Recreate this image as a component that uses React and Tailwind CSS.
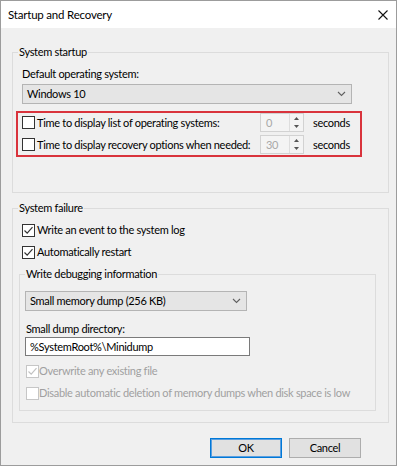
import React from "react";

const font = { fontFamily: 'Lato, "Noto Sans", sans-serif' };

function Check({ checked, disabled }) {
  const c = disabled ? "#c2c2c2" : "#333333";
  return (
    <span
      className={`flex h-[13px] w-[13px] shrink-0 items-center justify-center border bg-white ${
        disabled ? "border-[#c6c6c6]" : "border-[#333333]"
      }`}
    >
      {checked && (
        <svg width="11" height="11" viewBox="0 0 11 11">
          <path d="M1.5 5.5 L4.2 8.2 L9.5 2.2" fill="none" stroke={c} strokeWidth="1.2" />
        </svg>
      )}
    </span>
  );
}

function Chevron() {
  return (
    <svg width="9" height="6" viewBox="0 0 9 6">
      <path d="M1 1 L4.5 4.5 L8 1" fill="none" stroke="#606060" strokeWidth="1.1" />
    </svg>
  );
}

function Spinner({ value }) {
  return (
    <div className="flex h-[19px] w-[44px] border border-[#d2d2d2] bg-[#f4f4f4]">
      <span className="flex-1 pl-[5px] text-[#a8a8a8] leading-[17px]">{value}</span>
      <div className="flex w-[14px] flex-col border-l border-[#dedede]">
        <div className="flex flex-1 items-center justify-center">
          <svg width="5" height="3" viewBox="0 0 5 3">
            <path d="M0 3 L2.5 0 L5 3 Z" fill="#555" />
          </svg>
        </div>
        <div className="flex flex-1 items-center justify-center">
          <svg width="5" height="3" viewBox="0 0 5 3">
            <path d="M0 0 L2.5 3 L5 0 Z" fill="#555" />
          </svg>
        </div>
      </div>
    </div>
  );
}

function TimeRow({ label, value }) {
  return (
    <div className="flex h-[19px] items-center">
      <div className="flex w-[242px] items-center gap-[2px] pl-[4px]">
        <Check />
        <span>{label}</span>
      </div>
      <Spinner value={value} />
      <span className="ml-[9px]">seconds</span>
    </div>
  );
}

export default function App() {
  return (
    <div
      className="h-[468px] w-[400px] whitespace-nowrap bg-white text-[11px] leading-[16px] tracking-[-0.3px] text-black"
      style={font}
    >
      <div className="flex h-[466px] w-[397px] flex-col border border-[#9c9c9c]">
        <div className="flex h-[27px] shrink-0 items-center justify-between bg-white pl-[7px] pr-[8px]">
          <span className="text-[11.5px] tracking-[-0.2px]">Startup and Recovery</span>
          <svg width="10" height="10" viewBox="0 0 10 10">
            <path d="M0.5 0.5 L9.5 9.5 M9.5 0.5 L0.5 9.5" stroke="#111" strokeWidth="1.1" />
          </svg>
        </div>

        <div className="flex flex-1 flex-col bg-[#f0f0f0] pl-[11px] pt-[16px]">
          <fieldset className="w-[377px] border border-[#dcdcdc] pb-[35px] pl-[9px] pr-[10px]">
            <legend className="-ml-[4px] px-[1px]">System startup</legend>
            <div className="mt-[6px]">Default operating system:</div>
            <div className="mt-[2px] flex h-[20px] w-[330px] items-center justify-between border border-[#b4b4b4] bg-[#e5e5e5] pl-[4px] pr-[5px]">
              <span>Windows 10</span>
              <Chevron />
            </div>
            <div className="-ml-[6px] mt-[7px] flex w-[346px] flex-col gap-[3px] border-2 border-[#d9333c] pb-[1px]">
              <TimeRow label="Time to display list of operating systems:" value="0" />
              <TimeRow label="Time to display recovery options when needed:" value="30" />
            </div>
          </fieldset>

          <fieldset className="mt-[7px] w-[377px] border border-[#dcdcdc] pb-[11px] pl-[9px] pr-[10px]">
            <legend className="-ml-[4px] px-[1px]">System failure</legend>
            <div className="mt-[6px] flex h-[16px] items-center gap-[2px]">
              <Check checked />
              <span>Write an event to the system log</span>
            </div>
            <div className="mt-[6px] flex h-[16px] items-center gap-[2px]">
              <Check checked />
              <span>Automatically restart</span>
            </div>

            <fieldset className="-ml-[3px] mt-[6px] w-[357px] border border-[#dcdcdc] pb-[9px] pl-[5px]">
              <legend className="px-[1px]">Write debugging information</legend>
              <div className="mt-[9px] flex h-[20px] w-[222px] items-center justify-between border border-[#b4b4b4] bg-[#e5e5e5] pl-[4px] pr-[5px]">
                <span>Small memory dump (256 KB)</span>
                <Chevron />
              </div>
              <div className="mt-[10px] pl-[1px]">Small dump directory:</div>
              <div className="flex h-[19px] w-[225px] items-center border border-[#7a7a7a] bg-white pl-[4px]">
                %SystemRoot%\Minidump
              </div>
              <div className="ml-[1px] mt-[7px] flex h-[16px] items-center text-[#a0a0a0]">
                <Check checked disabled />
                <span>Overwrite any existing file</span>
              </div>
              <div className="ml-[1px] mt-[6px] flex h-[16px] items-center text-[#a0a0a0]">
                <Check disabled />
                <span>Disable automatic deletion of memory dumps when disk space is low</span>
              </div>
            </fieldset>
          </fieldset>

          <div className="mt-[15px] flex gap-[7px] pl-[198px]">
            <button className="h-[20px] w-[72px] border border-[#0078d7] bg-[#e1e1e1] shadow-[inset_0_0_0_1px_#5a9fe0]">
              OK
            </button>
            <button className="h-[20px] w-[72px] border border-[#adadad] bg-[#e1e1e1]">Cancel</button>
          </div>
        </div>
      </div>
    </div>
  );
}
